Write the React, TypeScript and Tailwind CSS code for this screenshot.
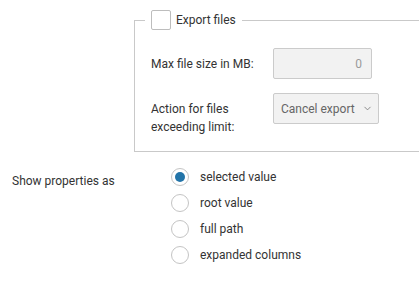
import { ChevronDown } from "lucide-react";

const options = ["selected value", "root value", "full path", "expanded columns"];

export default function App() {
  const selected = 0;

  return (
    <div
      className="relative w-[419px] h-[282px] overflow-hidden bg-white pt-[10px] text-[12px] text-[#333]"
      style={{ fontFamily: "Roboto, 'Liberation Sans', sans-serif" }}
    >
      <fieldset className="ml-[134px] w-[400px] border border-[#c9c9c9] pl-[10px] pb-[15px]">
        <legend className="flex items-center gap-[5px] px-[6px] h-[20px]">
          <span className="block w-[20px] h-[20px] rounded-[2px] border border-[#bdbdbd] bg-white" />
          <span className="leading-[18px]">Export files</span>
        </legend>

        <div className="ml-[6px] mt-[18px] flex flex-col gap-[14px]">
          <div className="flex items-center">
            <label className="w-[122px] leading-[18px]">Max file size in MB:</label>
            <div className="w-[99px] h-[31px] rounded-[2px] border border-[#cbcbcb] bg-[#f2f2f2] flex items-center justify-end pr-[9px] text-[#9a9a9a]">
              0
            </div>
          </div>

          <div className="flex items-start">
            <label className="w-[122px] pt-[7px] leading-[18px]">
              Action for files
              <br />
              exceeding limit:
            </label>
            <div className="w-[106px] h-[31px] rounded-[2px] border border-[#cbcbcb] bg-[#f2f2f2] flex items-center justify-between pl-[7px] pr-[5px] text-[#666]">
              <span>Cancel export</span>
              <ChevronDown className="w-[11px] h-[11px] text-[#777]" strokeWidth={1.8} />
            </div>
          </div>
        </div>
      </fieldset>

      <div className="mt-[12px] flex">
        <div className="w-[171px] pl-[12px] pt-[8px] leading-[18px]">Show properties as</div>
        <div className="flex flex-col">
          {options.map((opt, i) => (
            <div key={opt} className="flex items-center h-[26px]">
              <span className="flex items-center justify-center w-[18px] h-[18px] rounded-full border border-[#c4c4c4] bg-white">
                {i === selected && <span className="block w-[10px] h-[10px] rounded-full bg-[#2374a8]" />}
              </span>
              <span className="ml-[11px] leading-[18px]">{opt}</span>
            </div>
          ))}
        </div>
      </div>
    </div>
  );
}
